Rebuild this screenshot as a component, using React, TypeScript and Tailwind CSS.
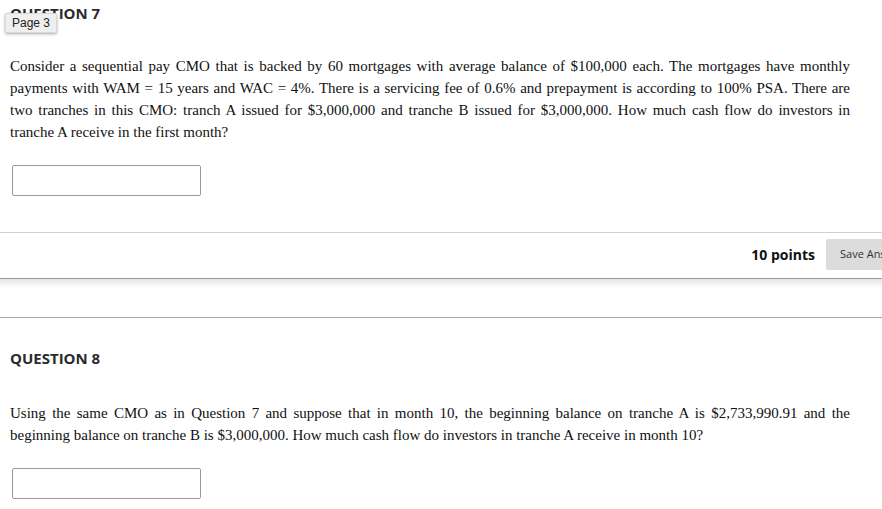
import React from 'react';

const serif = { fontFamily: '"Liberation Serif", "Times New Roman", serif' };

const AnswerBox: React.FC = () => (
  <div className="ml-[12px] w-[189px] h-[31px] border border-[#9a9a9a] rounded-[2px] bg-white" />
);

const App: React.FC = () => {
  return (
    <div className="w-[882px] h-[509px] overflow-hidden bg-white text-[#222] font-['Open_Sans',sans-serif]">
      {/* Question 7 */}
      <div className="relative h-[44px]">
        <h2 className="absolute left-[10px] top-[3px] text-[15px] font-bold leading-[20px] text-[#2b2b2b]">QUESTION 7</h2>
        <div className="absolute left-[5px] top-[13px] h-[20px] px-[6px] flex items-center bg-[#efefef] border border-[#d8d8d8] rounded-[2px] shadow-[0_1px_3px_rgba(0,0,0,0.35)] text-[12px] text-[#222] font-['Liberation_Sans',Arial,sans-serif]">
          Page 3
        </div>
      </div>

      <p style={serif} className="ml-[10px] w-[840px] mt-[11px] text-[15px] leading-[22px] text-justify text-[#111]">
        Consider a sequential pay CMO that is backed by 60 mortgages with average balance of $100,000 each. The mortgages have monthly payments with WAM = 15 years and WAC = 4%. There is a servicing fee of 0.6% and prepayment is according to 100% PSA. There are two tranches in this CMO: tranch A issued for $3,000,000 and tranche B issued for $3,000,000. How much cash flow do investors in tranche A receive in the first month?
      </p>

      <div className="mt-[22px]">
        <AnswerBox />
      </div>

      <div className="mt-[36px] border-t border-[#cfcfcf]" />

      <div className="flex items-center justify-end h-[45px] pb-[2px]">
        <span className="text-[14px] font-bold text-[#111] mr-[11px] -mt-[1px]">10 points</span>
        <div className="w-[56px] h-[31px] bg-[#dcdcdc] rounded-l-[2px] flex items-center pl-[14px] overflow-hidden whitespace-nowrap text-[11px] text-[#333]">
          Save Answer
        </div>
      </div>

      <div className="border-t border-[#999] h-[10px] bg-gradient-to-b from-[#e6e6e6] to-white" />

      <div className="mt-[29px] border-t border-[#a5a5a5]" />

      {/* Question 8 */}
      <h2 className="mt-[30px] ml-[10px] text-[15px] font-bold leading-[20px] text-[#2b2b2b]">QUESTION 8</h2>

      <p style={serif} className="ml-[10px] w-[840px] mt-[34px] text-[15px] leading-[22px] text-justify text-[#111]">
        Using the same CMO as in Question 7 and suppose that in month 10, the beginning balance on tranche A is $2,733,990.91 and the beginning balance on tranche B is $3,000,000. How much cash flow do investors in tranche A receive in month 10?
      </p>

      <div className="mt-[22px]">
        <AnswerBox />
      </div>
    </div>
  );
};

export default App;
